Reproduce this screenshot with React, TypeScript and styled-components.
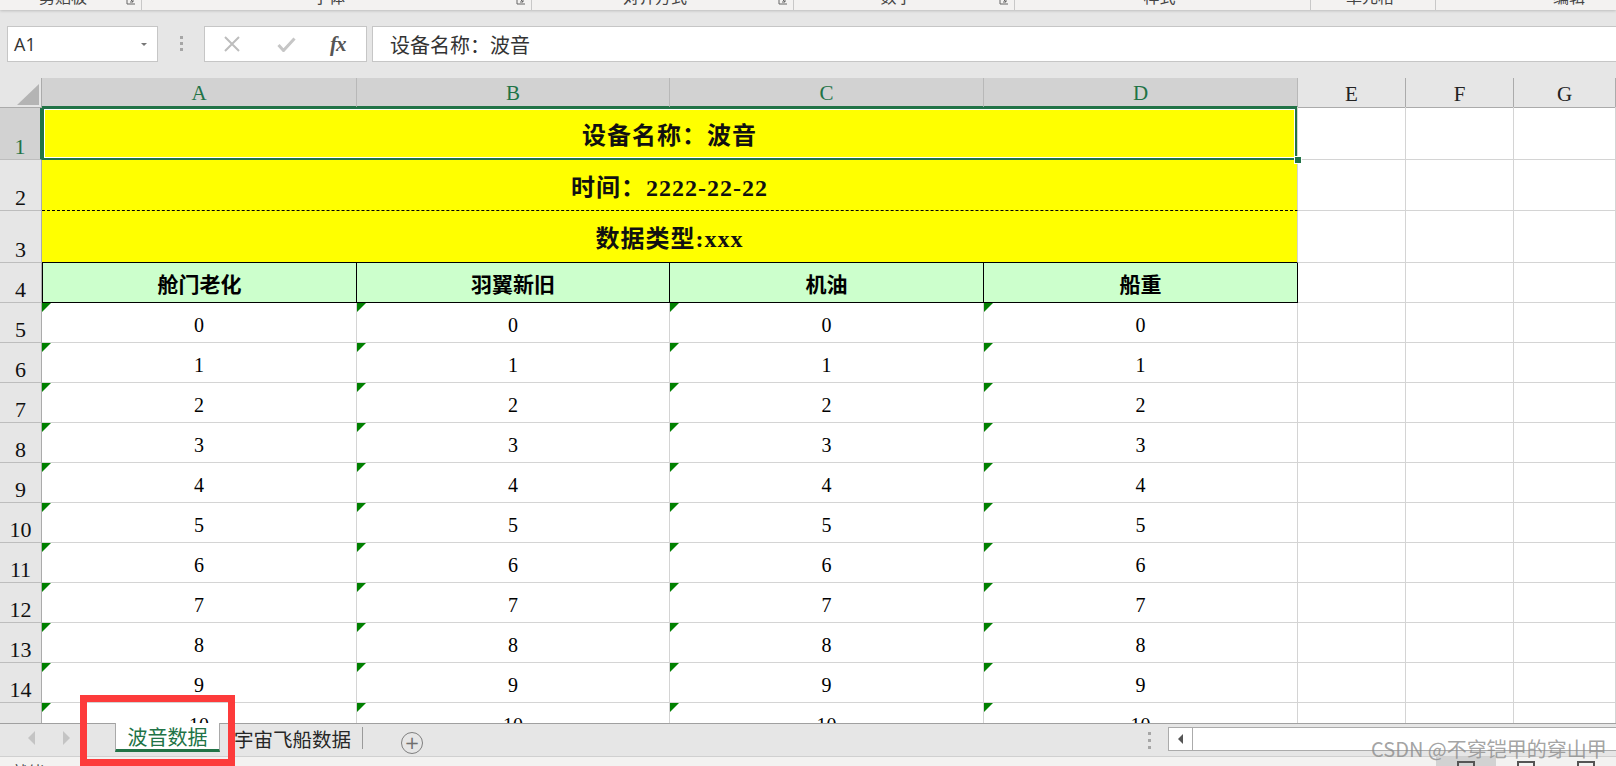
import styled, { createGlobalStyle } from 'styled-components';

const GlobalStyle = createGlobalStyle`
  html, body {
    margin: 0;
    padding: 0;
  }
  body {
    width: 1616px;
    height: 766px;
    overflow: hidden;
    background: #e6e6e6;
    font-family: "Noto Sans CJK SC", sans-serif;
  }
`;

const green = '#217346';
const COLS = '42px 315px 313px 314px 314px 108px 108px 1fr';

const Page = styled.div`
  position: relative;
  width: 1616px;
  height: 766px;
  display: flex;
  flex-direction: column;
  overflow: hidden;
  background: #e6e6e6;
`;

// Ribbon (only its bottom edge is visible)
//
const Ribbon = styled.div`
  height: 10px;
  flex: none;
  display: flex;
  background: #f3f2f1;
  overflow: hidden;
  box-shadow: 0 1px 3px rgba(0, 0, 0, 0.18);
  position: relative;
  z-index: 1;
`;

const RibbonGroup = styled.div<{ w: number; last?: boolean }>`
  width: ${({ w }) => w}px;
  flex: none;
  display: flex;
  align-items: flex-start;
  padding-right: 6px;
  box-sizing: border-box;
  border-right: ${({ last }) => (last ? 'none' : '1px solid #c8c8c8')};
`;

const Grow = styled.div`
  flex: 1;
`;

const GroupLabel = styled.span<{ shift?: number }>`
  font-size: 16px;
  line-height: 16px;
  margin-top: -12px;
  color: #444;
  white-space: nowrap;
  transform: translateX(${({ shift }) => shift ?? 0}px);
`;

const Launcher = styled.svg`
  width: 9px;
  height: 9px;
  margin-top: -4px;
  flex: none;
`;

// Formula bar
//
const FormulaRow = styled.div`
  height: 68px;
  flex: none;
  display: flex;
  align-items: flex-start;
  padding-top: 16px;
  box-sizing: border-box;
`;

const NameBox = styled.div`
  margin-left: 7px;
  width: 151px;
  height: 36px;
  box-sizing: border-box;
  border: 1px solid #c6c6c6;
  background: #fff;
  display: flex;
  align-items: center;
  padding: 0 10px 0 6px;
  font-family: "Open Sans", sans-serif;
  font-size: 18px;
  color: #333;
`;

const Caret = styled.span`
  margin-left: auto;
  width: 0;
  height: 0;
  border-left: 3px solid transparent;
  border-right: 3px solid transparent;
  border-top: 3px solid #777;
`;

const Dots = styled.div`
  margin: 10px 0 0 22px;
  width: 3px;
  display: flex;
  flex-direction: column;
  gap: 3px;
  span {
    width: 3px;
    height: 3px;
    background: #a6a6a6;
  }
`;

const FxBox = styled.div`
  margin-left: 21px;
  width: 163px;
  height: 36px;
  box-sizing: border-box;
  border: 1px solid #c6c6c6;
  background: #fff;
  display: flex;
  align-items: center;
  padding-left: 18px;
`;

const FxIcon = styled.svg<{ gap?: number }>`
  margin-left: ${({ gap }) => gap ?? 0}px;
  flex: none;
`;

const FxText = styled.span`
  margin-left: 34px;
  font-family: "Liberation Serif", serif;
  font-style: italic;
  font-weight: bold;
  font-size: 21px;
  color: #555;
  letter-spacing: -1px;
`;

const FormulaInput = styled.div`
  margin-left: 5px;
  flex: 1;
  height: 36px;
  box-sizing: border-box;
  border: 1px solid #c6c6c6;
  border-right: none;
  background: #fff;
  padding-left: 17px;
  display: flex;
  align-items: center;
  font-size: 20px;
  color: #333;
`;

// Grid
//
const Sheet = styled.div`
  height: 645px;
  flex: none;
  overflow: hidden;
  background: #fff;
  display: flex;
  flex-direction: column;
`;

const HeaderRow = styled.div`
  display: grid;
  grid-template-columns: ${COLS};
  height: 29px;
  flex: none;
`;

const Corner = styled.div`
  position: relative;
  background: #e6e6e6;
  border-right: 1px solid #ababab;
  border-bottom: 1px solid #ababab;
  &::after {
    content: '';
    position: absolute;
    right: 2px;
    bottom: 2px;
    border-left: 22px solid transparent;
    border-bottom: 21px solid #b4b4b4;
  }
`;

const ColHead = styled.div<{ selected?: boolean }>`
  background: ${({ selected }) => (selected ? '#d2d2d2' : '#e6e6e6')};
  border-right: 1px solid ${({ selected }) => (selected ? '#b8b8b8' : '#ababab')};
  border-bottom: ${({ selected }) =>
    selected ? `2px solid ${green}` : '1px solid #ababab'};
  color: ${({ selected }) => (selected ? green : '#222')};
  font-family: "Liberation Serif", serif;
  font-size: 21px;
  display: flex;
  align-items: center;
  justify-content: center;
  padding-top: 3px;
`;

const SheetRow = styled.div<{ h: number }>`
  display: grid;
  grid-template-columns: ${COLS};
  height: ${({ h }) => h}px;
  flex: none;
`;

const RowHead = styled.div<{ selected?: boolean }>`
  background: ${({ selected }) => (selected ? '#d2d2d2' : '#e6e6e6')};
  border-right: ${({ selected }) =>
    selected ? `2px solid ${green}` : '1px solid #ababab'};
  border-bottom: 1px solid #bdbdbd;
  color: ${({ selected }) => (selected ? green : '#111')};
  font-family: "Liberation Serif", serif;
  font-size: 22px;
  line-height: 22px;
  display: flex;
  align-items: flex-end;
  justify-content: center;
  padding-bottom: 1px;
  box-sizing: border-box;
`;

const Banner = styled.div<{ edge: 'select' | 'dashed' | 'solid' }>`
  position: relative;
  grid-column: span 4;
  background: #ffff00;
  display: flex;
  align-items: center;
  justify-content: center;
  font-family: "Liberation Serif", "Noto Sans CJK SC", serif;
  font-weight: bold;
  font-size: 24px;
  letter-spacing: 1px;
  color: #111;
  border-right: 1px solid #d4d4d4;
  border-bottom: ${({ edge }) =>
    edge === 'dashed' ? '1px dashed #000' : edge === 'solid' ? '1px solid #000' : 'none'};
  box-shadow: ${({ edge }) =>
    edge === 'select' ? `inset 0 0 0 2px ${green}, inset 0 0 0 3px #fff` : 'none'};
  &::after {
    content: '';
    display: ${({ edge }) => (edge === 'select' ? 'block' : 'none')};
    position: absolute;
    right: -5px;
    bottom: -4px;
    width: 6px;
    height: 6px;
    background: ${green};
    border: 1px solid #fff;
    z-index: 2;
  }
`;

const HeadCell = styled.div<{ first?: boolean }>`
  background: #ccffcc;
  border-right: 1px solid #000;
  border-bottom: 1px solid #000;
  border-left: ${({ first }) => (first ? '1px solid #000' : 'none')};
  display: flex;
  align-items: center;
  justify-content: center;
  font-weight: bold;
  font-size: 21px;
  color: #000;
`;

const DataCell = styled.div`
  position: relative;
  border-right: 1px solid #d4d4d4;
  border-bottom: 1px solid #d4d4d4;
  display: flex;
  align-items: center;
  justify-content: center;
  padding-top: 5px;
  box-sizing: border-box;
  font-family: "Liberation Serif", serif;
  font-size: 20px;
  color: #000;
  &::before {
    content: '';
    position: absolute;
    left: 0;
    top: 0;
    border-top: 9px solid #008000;
    border-right: 9px solid transparent;
  }
`;

const EmptyCell = styled.div`
  border-right: 1px solid #d4d4d4;
  border-bottom: 1px solid #d4d4d4;
`;

// Sheet tabs
//
const TabBar = styled.div`
  height: 33px;
  flex: none;
  box-sizing: border-box;
  border-top: 1px solid #a0a0a0;
  display: flex;
  align-items: flex-start;
  background: #e6e6e6;
`;

const NavArrows = styled.div`
  width: 115px;
  flex: none;
  display: flex;
  align-items: center;
  height: 28px;
  padding-left: 28px;
  box-sizing: border-box;
  gap: 28px;
`;

const Arrow = styled.span<{ dir: 'left' | 'right' }>`
  width: 0;
  height: 0;
  border-top: 7px solid transparent;
  border-bottom: 7px solid transparent;
  ${({ dir }) =>
    dir === 'left' ? 'border-right: 7px solid #c4c4c4;' : 'border-left: 7px solid #c4c4c4;'}
`;

const ActiveTab = styled.div`
  margin-top: -1px;
  width: 105px;
  height: 29px;
  box-sizing: border-box;
  background: #fff;
  border-left: 1px solid #a9a9a9;
  border-right: 1px solid #a9a9a9;
  border-bottom: 3px solid ${green};
  color: ${green};
  font-size: 20px;
  display: flex;
  align-items: center;
  justify-content: center;
  padding-top: 1px;
`;

const Tab = styled.div`
  display: flex;
  align-items: center;
  padding: 0 11px 0 14px;
  font-size: 19.5px;
  color: #262626;
  border-right: 1px solid #9a9a9a;
  margin-top: 3px;
  height: 22px;
`;

const AddSheet = styled.div`
  margin: 8px 0 0 38px;
  width: 20px;
  height: 20px;
  border: 1px solid #7f7f7f;
  border-radius: 50%;
  display: flex;
  align-items: center;
  justify-content: center;
  color: #6f6f6f;
  font-family: "DejaVu Sans", sans-serif;
  font-size: 18px;
  line-height: 1;
`;

const ScrollDots = styled(Dots)`
  margin: 8px 0 0 0;
  gap: 4px;
`;

const HScroll = styled.div`
  margin: 3px 0 0 17px;
  width: 448px;
  height: 24px;
  box-sizing: border-box;
  background: #fff;
  border: 1px solid #ababab;
  border-right: none;
  display: flex;
`;

const ScrollBtn = styled.div`
  width: 23px;
  border-right: 1px solid #ababab;
  display: flex;
  align-items: center;
  justify-content: center;
  span {
    border-top: 5px solid transparent;
    border-bottom: 5px solid transparent;
    border-right: 5px solid #555;
  }
`;

// Status bar (cut off at the bottom)
//
const StatusBar = styled.div`
  height: 10px;
  flex: none;
  background: #f3f2f1;
  border-top: 1px solid #d0d0d0;
  display: flex;
  overflow: hidden;
`;

const StatusText = styled.span`
  margin: 6px 0 0 12px;
  font-size: 16px;
  line-height: 16px;
  color: #444;
`;

const ViewBlock = styled.div<{ active?: boolean }>`
  width: 60px;
  flex: none;
  background: ${({ active }) => (active ? '#d2d2d2' : 'transparent')};
  display: flex;
  justify-content: center;
  span {
    margin-top: 4px;
    width: 18px;
    height: 10px;
    border: 2px solid #555;
    box-sizing: border-box;
  }
`;

// Overlays
//
const Highlight = styled.div`
  position: absolute;
  left: 80px;
  top: 695px;
  width: 155px;
  height: 71px;
  box-sizing: border-box;
  border: 7px solid #fd3b3b;
  pointer-events: none;
`;

const Watermark = styled.div`
  position: absolute;
  left: 1371px;
  top: 734px;
  font-size: 20px;
  color: rgba(140, 140, 140, 0.8);
  white-space: nowrap;
  pointer-events: none;
`;

const ribbonGroups = [
  { label: '剪贴板', w: 142, launcher: true },
  { label: '字体', w: 390, launcher: true },
  { label: '对齐方式', w: 262, launcher: true },
  { label: '数字', w: 221, launcher: true },
  { label: '样式', w: 296 },
  { label: '单元格', w: 125 },
  { label: '编辑', w: 180, shift: 46 },
];

const columns = ['A', 'B', 'C', 'D', 'E', 'F', 'G'];
const headers = ['舱门老化', '羽翼新旧', '机油', '船重'];
const values = [0, 1, 2, 3, 4, 5, 6, 7, 8, 9, 10];

const Blank = () => (
  <>
    <EmptyCell />
    <EmptyCell />
    <EmptyCell />
  </>
);

export default function App() {
  return (
    <Page>
      <GlobalStyle />
      <Ribbon>
        {ribbonGroups.map((g, i) => (
          <RibbonGroup key={g.label} w={g.w} last={i === ribbonGroups.length - 1}>
            <Grow />
            <GroupLabel shift={g.shift}>{g.label}</GroupLabel>
            <Grow />
            {g.launcher && (
              <Launcher viewBox="0 0 9 9">
                <path d="M1 0v8h8" fill="none" stroke="#666" strokeWidth="1" />
                <path d="M3 2l4 4M7 3v3H4" fill="none" stroke="#666" strokeWidth="1" />
              </Launcher>
            )}
          </RibbonGroup>
        ))}
      </Ribbon>

      <FormulaRow>
        <NameBox>
          A1
          <Caret />
        </NameBox>
        <Dots>
          <span />
          <span />
          <span />
        </Dots>
        <FxBox>
          <FxIcon width="18" height="16" viewBox="0 0 18 16">
            <path d="M2 1l14 14M16 1L2 15" stroke="#bdbdbd" strokeWidth="2" />
          </FxIcon>
          <FxIcon gap={36} width="19" height="15" viewBox="0 0 19 15">
            <path d="M1.5 8l5 5.5L17.5 1.5" fill="none" stroke="#c6c6c6" strokeWidth="3" />
          </FxIcon>
          <FxText>fx</FxText>
        </FxBox>
        <FormulaInput>设备名称：波音</FormulaInput>
      </FormulaRow>

      <Sheet>
        <HeaderRow>
          <Corner />
          {columns.map((c, i) => (
            <ColHead key={c} selected={i < 4}>
              {c}
            </ColHead>
          ))}
          <ColHead />
        </HeaderRow>

        <SheetRow h={53}>
          <RowHead selected>1</RowHead>
          <Banner edge="select">设备名称：波音</Banner>
          <Blank />
        </SheetRow>
        <SheetRow h={51}>
          <RowHead>2</RowHead>
          <Banner edge="dashed">时间：2222-22-22</Banner>
          <Blank />
        </SheetRow>
        <SheetRow h={52}>
          <RowHead>3</RowHead>
          <Banner edge="solid">数据类型:xxx</Banner>
          <Blank />
        </SheetRow>
        <SheetRow h={40}>
          <RowHead>4</RowHead>
          {headers.map((h, i) => (
            <HeadCell key={h} first={i === 0}>
              {h}
            </HeadCell>
          ))}
          <Blank />
        </SheetRow>
        {values.map((v) => (
          <SheetRow key={v} h={40}>
            <RowHead>{v + 5}</RowHead>
            <DataCell>{v}</DataCell>
            <DataCell>{v}</DataCell>
            <DataCell>{v}</DataCell>
            <DataCell>{v}</DataCell>
            <Blank />
          </SheetRow>
        ))}
      </Sheet>

      <TabBar>
        <NavArrows>
          <Arrow dir="left" />
          <Arrow dir="right" />
        </NavArrows>
        <ActiveTab>波音数据</ActiveTab>
        <Tab>宇宙飞船数据</Tab>
        <AddSheet>+</AddSheet>
        <Grow />
        <ScrollDots>
          <span />
          <span />
          <span />
        </ScrollDots>
        <HScroll>
          <ScrollBtn>
            <span />
          </ScrollBtn>
        </HScroll>
      </TabBar>

      <StatusBar>
        <StatusText>就绪</StatusText>
        <StatusText>⊡</StatusText>
        <Grow />
        <ViewBlock active>
          <span />
        </ViewBlock>
        <ViewBlock>
          <span />
        </ViewBlock>
        <ViewBlock>
          <span />
        </ViewBlock>
      </StatusBar>

      <Highlight />
      <Watermark>CSDN @不穿铠甲的穿山甲</Watermark>
    </Page>
  );
}
